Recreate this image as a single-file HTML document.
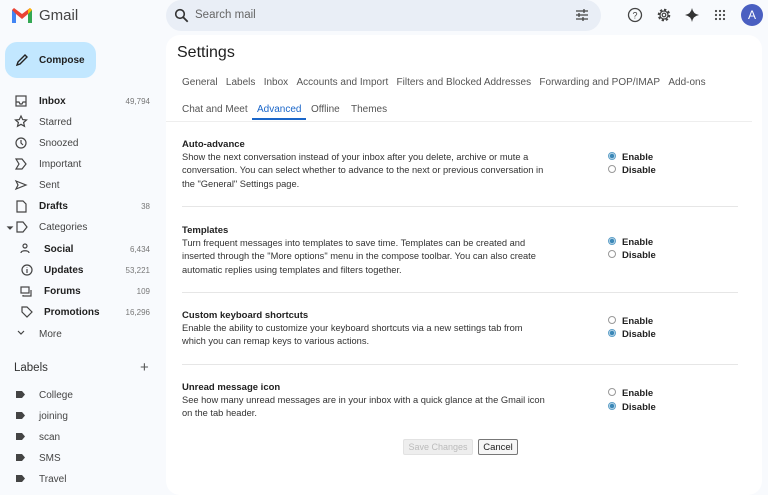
<!DOCTYPE html>
<html><head><meta charset="utf-8"><style>
*{margin:0;padding:0;box-sizing:border-box}
body{width:768px;height:488px;overflow:hidden;background:#f8fafd;font-family:"Liberation Sans",sans-serif;color:#1f1f1f;position:relative}
.a{position:absolute;white-space:nowrap}
.nav{font-size:10px;color:#444;margin-top:2px}
.nav b{color:#1f1f1f}
.cnt{font-size:8px;color:#777;text-align:right;width:60px;margin-top:2px}
.tab{font-size:10px;color:#555;margin-top:2px}
.t{font-size:9.5px;font-weight:bold;color:#222;margin-top:1px}
.d{font-size:9.3px;color:#333;line-height:13.3px;margin-top:1px}
.hr{position:absolute;left:182px;width:556px;height:1px;background:#e6e6e6}
.r{position:absolute;width:8px;height:8px;border-radius:50%;border:1px solid #999;background:#fff}
.r.on{border-color:#5fa0c8;background:radial-gradient(circle,#3b88b8 0 2px,#cfe3f0 2.5px)}
.rl{font-size:9.5px;font-weight:bold;color:#222;margin-top:1px}
</style></head><body>
<svg class="a" style="left:11px;top:7px" width="22" height="17" viewBox="0 0 22 17"><path d="M1 3v13h4V7l6 5 6-5v9h4V3l-2-2-8 6-8-6z" fill="#ea4335"/><path d="M1 3v13h4V7z" fill="#4285f4"/><path d="M17 7v9h4V3z" fill="#34a853"/><path d="M19 1l2 2-4 4V3z" fill="#fbbc04"/></svg>
<div class="a" style="left:39px;top:7px;font-size:15px;color:#444">Gmail</div>
<div class="a" style="left:166px;top:0;width:435px;height:31px;background:#e9eef6;border-radius:16px"></div>
<svg class="a" style="left:174px;top:8px" width="15" height="15" viewBox="0 0 15 15"><circle cx="6" cy="6" r="4.3" stroke="#333" stroke-width="1.6" fill="none"/><path d="M9.2 9.2l4.5 4.5" stroke="#333" stroke-width="1.8"/></svg>
<div class="a" style="left:195px;top:9px;font-size:11.5px;color:#666">Search mail</div>
<svg class="a" style="left:575px;top:8px" width="14" height="14" viewBox="0 0 14 14" stroke="#444" stroke-width="1.3"><path d="M1 3h12M1 7h12M1 11h12"/><path d="M9 1v4M4 5v4M8 9v4"/></svg>
<svg class="a" style="left:627px;top:7px" width="16" height="16" viewBox="0 0 16 16"><circle cx="8" cy="8" r="6.5" stroke="#444" stroke-width="1.3" fill="none"/><text x="8" y="11.5" font-size="9" text-anchor="middle" fill="#444" font-family="Liberation Sans">?</text></svg>
<svg class="a" style="left:656px;top:7px" width="16" height="16" viewBox="0 0 16 16"><circle cx="8" cy="8" r="5" stroke="#444" stroke-width="2.6" stroke-dasharray="2.2 1.7" fill="none"/><circle cx="8" cy="8" r="4" stroke="#444" stroke-width="1.2" fill="none"/><circle cx="8" cy="8" r="1.8" stroke="#444" stroke-width="1.2" fill="none"/></svg>
<svg class="a" style="left:684px;top:7px" width="16" height="16" viewBox="0 0 16 16"><path d="M8 1Q9 7 15 8Q9 9 8 15Q7 9 1 8Q7 7 8 1z" fill="#333"/></svg>
<svg class="a" style="left:714px;top:9px" width="12" height="12" viewBox="0 0 12 12" fill="#444"><circle cx="2" cy="2" r="1.1"/><circle cx="6" cy="2" r="1.1"/><circle cx="10" cy="2" r="1.1"/><circle cx="2" cy="6" r="1.1"/><circle cx="6" cy="6" r="1.1"/><circle cx="10" cy="6" r="1.1"/><circle cx="2" cy="10" r="1.1"/><circle cx="6" cy="10" r="1.1"/><circle cx="10" cy="10" r="1.1"/></svg>
<div class="a" style="left:741px;top:4px;width:22px;height:22px;border-radius:50%;background:#4a5fc1;color:#fff;font-size:12px;text-align:center;line-height:22px">A</div>
<div class="a" style="left:5px;top:42px;width:91px;height:36px;background:#c2e7ff;border-radius:12px"></div>
<svg class="a" style="left:15px;top:53px" width="14" height="14" viewBox="0 0 14 14"><path d="M2 12l1-3 7-7 2 2-7 7z" stroke="#222" stroke-width="1.4" fill="none"/></svg>
<div class="a" style="left:39px;top:55px;font-size:10px;font-weight:bold;color:#1f1f1f">Compose</div>
<div class="a nav" style="left:39px;top:94px"><b>Inbox</b></div><div class="a cnt" style="left:90px;top:95px">49,794</div>
<div class="a nav" style="left:39px;top:115px">Starred</div>
<div class="a nav" style="left:39px;top:136px">Snoozed</div>
<div class="a nav" style="left:39px;top:157px">Important</div>
<div class="a nav" style="left:39px;top:178px">Sent</div>
<div class="a nav" style="left:39px;top:199px"><b>Drafts</b></div><div class="a cnt" style="left:90px;top:200px">38</div>
<div class="a nav" style="left:39px;top:220px">Categories</div>
<div class="a nav" style="left:44px;top:242px"><b>Social</b></div><div class="a cnt" style="left:90px;top:243px">6,434</div>
<div class="a nav" style="left:44px;top:263px"><b>Updates</b></div><div class="a cnt" style="left:90px;top:264px">53,221</div>
<div class="a nav" style="left:44px;top:284px"><b>Forums</b></div><div class="a cnt" style="left:90px;top:285px">109</div>
<div class="a nav" style="left:44px;top:305px"><b>Promotions</b></div><div class="a cnt" style="left:90px;top:306px">16,296</div>
<div class="a nav" style="left:39px;top:327px">More</div>
<div class="a" style="left:14px;top:362px;font-size:11.5px;color:#333">Labels</div>
<div class="a" style="left:140px;top:359px;font-size:15px;color:#555">+</div>
<div class="a nav" style="left:39px;top:388px">College</div>
<div class="a nav" style="left:39px;top:409px">joining</div>
<div class="a nav" style="left:39px;top:430px">scan</div>
<div class="a nav" style="left:39px;top:451px">SMS</div>
<div class="a nav" style="left:39px;top:472px">Travel</div>
<svg class="a" style="left:0;top:91px" width="40" height="397" viewBox="0 90 40 397" fill="none" stroke="#444" stroke-width="1.2">
<rect x="16" y="95" width="10" height="10"/><path d="M16 101h3l1 2h2l1-2h3"/>
<path d="M21 115l1.7 3.6 3.8.4-2.9 2.5.9 3.8-3.5-2-3.5 2 .9-3.8-2.9-2.5 3.8-.4z"/>
<circle cx="21" cy="142" r="5"/><path d="M21 139v3l2 2"/>
<path d="M16 158h6l4 5-4 5h-6l3-5z"/>
<path d="M16 180l10 4-10 4 2-4z"/>
<path d="M17 200h6l3 3v8h-9z"/>
<path d="M17 221h6l4 5-4 5h-6z"/><path d="M8 226l2 2 2-2z" fill="#444"/>
<circle cx="25" cy="245" r="2"/><path d="M21 252c0-3 8-3 8 0"/>
<circle cx="27" cy="269" r="5"/><path d="M27 268v4M27 266v.5"/>
<rect x="21" y="286" width="8" height="6"/><path d="M23 294v1h8v-6"/>
<path d="M22 306h5l5 5-5 5-5-5z"/>
<path d="M18 330l3 3 3-3"/>
</svg>
<svg class="a" style="left:16px;top:391px" width="12" height="95" fill="#444"><path d="M0 0h6l3 3.5-3 3.5H0z"/><path d="M0 21h6l3 3.5-3 3.5H0z"/><path d="M0 42h6l3 3.5-3 3.5H0z"/><path d="M0 63h6l3 3.5-3 3.5H0z"/><path d="M0 84h6l3 3.5-3 3.5H0z"/></svg>
<div class="a" style="left:166px;top:35px;width:596px;height:460px;background:#fff;border-radius:14px"></div>
<div class="a" style="left:177px;top:44px;font-size:16px;color:#1f1f1f">Settings</div>
<div class="a tab" style="left:182px;top:75px">General&nbsp;&nbsp;&nbsp;Labels&nbsp;&nbsp;&nbsp;Inbox&nbsp;&nbsp;&nbsp;Accounts and Import&nbsp;&nbsp;&nbsp;Filters and Blocked Addresses&nbsp;&nbsp;&nbsp;Forwarding and POP/IMAP&nbsp;&nbsp;&nbsp;Add-ons</div>
<div class="a tab" style="left:182px;top:102px">Chat and Meet</div>
<div class="a tab" style="left:257px;top:102px;color:#1a66c9">Advanced</div>
<div class="a tab" style="left:311px;top:102px">Offline</div>
<div class="a tab" style="left:351px;top:102px">Themes</div>
<div class="a" style="left:252px;top:118px;width:54px;height:2px;background:#1a66c9"></div>
<div class="a" style="left:166px;top:121px;width:586px;height:1px;background:#eee"></div>
<div class="a t" style="left:182px;top:138px">Auto-advance</div>
<div class="a d" style="left:182px;top:150px">Show the next conversation instead of your inbox after you delete, archive or mute a<br>conversation. You can select whether to advance to the next or previous conversation in<br>the "General" Settings page.</div>
<div class="r on" style="left:608px;top:152px"></div><div class="a rl" style="left:622px;top:151px">Enable</div>
<div class="r" style="left:608px;top:165px"></div><div class="a rl" style="left:622px;top:164px">Disable</div>
<div class="hr" style="top:206px"></div>
<div class="a t" style="left:182px;top:224px">Templates</div>
<div class="a d" style="left:182px;top:236px">Turn frequent messages into templates to save time. Templates can be created and<br>inserted through the "More options" menu in the compose toolbar. You can also create<br>automatic replies using templates and filters together.</div>
<div class="r on" style="left:608px;top:237px"></div><div class="a rl" style="left:622px;top:236px">Enable</div>
<div class="r" style="left:608px;top:250px"></div><div class="a rl" style="left:622px;top:249px">Disable</div>
<div class="hr" style="top:292px"></div>
<div class="a t" style="left:182px;top:309px">Custom keyboard shortcuts</div>
<div class="a d" style="left:182px;top:321px">Enable the ability to customize your keyboard shortcuts via a new settings tab from<br>which you can remap keys to various actions.</div>
<div class="r" style="left:608px;top:316px"></div><div class="a rl" style="left:622px;top:315px">Enable</div>
<div class="r on" style="left:608px;top:329px"></div><div class="a rl" style="left:622px;top:328px">Disable</div>
<div class="hr" style="top:364px"></div>
<div class="a t" style="left:182px;top:381px">Unread message icon</div>
<div class="a d" style="left:182px;top:393px">See how many unread messages are in your inbox with a quick glance at the Gmail icon<br>on the tab header.</div>
<div class="r" style="left:608px;top:388px"></div><div class="a rl" style="left:622px;top:387px">Enable</div>
<div class="r on" style="left:608px;top:402px"></div><div class="a rl" style="left:622px;top:401px">Disable</div>
<div class="a" style="left:403px;top:439px;width:70px;height:16px;background:#eee;border:1px solid #e2e2e2;border-radius:2px;font-size:9px;color:#bbb;text-align:center;line-height:14px">Save Changes</div>
<div class="a" style="left:478px;top:439px;width:40px;height:16px;background:#f6f6f6;border:1px solid #777;border-radius:2px;font-size:9.5px;color:#222;text-align:center;line-height:15px">Cancel</div>
</body></html>
